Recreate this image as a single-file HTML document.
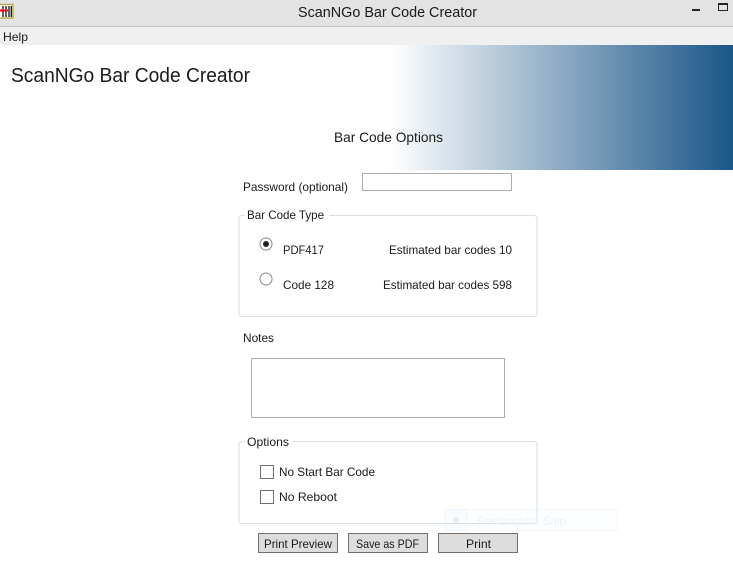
<!DOCTYPE html>
<html>
<head>
<meta charset="utf-8">
<style>
html,body{margin:0;padding:0;background:#fff;}
body{width:733px;height:561px;overflow:hidden;position:relative;}
div{position:absolute;box-sizing:border-box;}
svg{position:absolute;left:0;top:0;}
text{font-family:"Liberation Sans",sans-serif;fill:#1a1a1a;font-size:12px;}
</style>
</head>
<body>
<div style="left:0;top:0;width:733px;height:26px;background:#e3e3e3"></div>
<div style="left:0;top:26px;width:733px;height:1px;background:#c2c2c2"></div>
<div style="left:0;top:27px;width:733px;height:18px;background:#f0f0f0"></div>
<div style="left:390px;top:45px;width:343px;height:125px;background:linear-gradient(to right,#fff,#1b5688)"></div>

<!-- ghost snip -->
<div style="left:445px;top:509px;width:173px;height:22px;background:#fcfeff;border:1px solid #f3f8fc"></div>
<div style="left:445px;top:509px;width:22px;height:22px;background:#f7fbfe;border:1px solid #f1f7fb"></div>
<div style="left:453px;top:517px;width:6px;height:6px;border-radius:50%;background:#e8edf1"></div>

<!-- inputs -->
<div style="left:362px;top:173px;width:150px;height:18px;border:1px solid #abadb3;background:#fff"></div>
<div style="left:251px;top:358px;width:254px;height:60px;border:1px solid #abadb3;background:#fff"></div>

<!-- buttons -->
<div style="left:258px;top:533px;width:80px;height:20px;background:#ddd;border:1px solid #707070"></div>
<div style="left:348px;top:533px;width:80px;height:20px;background:#ddd;border:1px solid #707070"></div>
<div style="left:438px;top:533px;width:80px;height:20px;background:#ddd;border:1px solid #707070"></div>

<svg width="733" height="561" viewBox="0 0 733 561">
  <!-- app icon -->
  <rect x="-2" y="4.5" width="15" height="13.5" fill="#fff" stroke="#c2a94f" stroke-width="1.5"/>
  <path d="M3 6V17M6 6V17M9 6V17M11.3 6V17" stroke="#111" stroke-width="1.3" fill="none"/>
  <path d="M0 10.5H8" stroke="#e8121a" stroke-width="2" fill="none"/>
  <path d="M0 10.5L3 8V13Z" fill="#e8121a"/>

  <!-- window controls -->
  <rect x="692" y="9" width="8" height="2" fill="#222"/>
  <path d="M718.5 3.5H727.5V10.5H718.5Z" fill="none" stroke="#222" stroke-width="1"/>
  <rect x="718" y="3" width="10" height="2" fill="#222"/>

  <!-- group boxes -->
  <path d="M245 215.5H242a3 3 0 0 0-3 3V313.5a3 3 0 0 0 3 3H534a3 3 0 0 0 3-3V218.5a3 3 0 0 0-3-3H329" fill="none" stroke="#d5dfe5"/>
  <path d="M245 441.5H242a3 3 0 0 0-3 3V520.5a3 3 0 0 0 3 3H534a3 3 0 0 0 3-3V444.5a3 3 0 0 0-3-3H293" fill="none" stroke="#d5dfe5"/>

  <!-- radios -->
  <circle cx="266" cy="244" r="6" fill="#fff" stroke="#8a8a8a"/>
  <circle cx="266" cy="244" r="3" fill="#222"/>
  <circle cx="266" cy="279" r="6" fill="#fff" stroke="#8a8a8a"/>

  <!-- checkboxes -->
  <rect x="260.5" y="465.5" width="13" height="13" fill="#fff" stroke="#707070"/>
  <rect x="260.5" y="490.5" width="13" height="13" fill="#fff" stroke="#707070"/>

  <!-- text -->
  <text x="298" y="17" style="font-size:14.5px" textLength="179" lengthAdjust="spacingAndGlyphs">ScanNGo Bar Code Creator</text>
  <text x="3" y="41" textLength="25" lengthAdjust="spacingAndGlyphs">Help</text>
  <text x="11" y="82" style="font-size:20px" textLength="239" lengthAdjust="spacingAndGlyphs">ScanNGo Bar Code Creator</text>
  <text x="334" y="142" style="font-size:14px" textLength="109" lengthAdjust="spacingAndGlyphs">Bar Code Options</text>
  <text x="243" y="191" textLength="105" lengthAdjust="spacingAndGlyphs">Password (optional)</text>
  <text x="247" y="219" textLength="77" lengthAdjust="spacingAndGlyphs">Bar Code Type</text>
  <text x="283" y="254" textLength="41" lengthAdjust="spacingAndGlyphs">PDF417</text>
  <text x="389" y="254" textLength="123" lengthAdjust="spacingAndGlyphs">Estimated bar codes 10</text>
  <text x="283" y="289" textLength="51" lengthAdjust="spacingAndGlyphs">Code 128</text>
  <text x="383" y="289" textLength="129" lengthAdjust="spacingAndGlyphs">Estimated bar codes 598</text>
  <text x="243" y="342" textLength="31" lengthAdjust="spacingAndGlyphs">Notes</text>
  <text x="247" y="446" textLength="42" lengthAdjust="spacingAndGlyphs">Options</text>
  <text x="279" y="476" textLength="96" lengthAdjust="spacingAndGlyphs">No Start Bar Code</text>
  <text x="279" y="501" textLength="58" lengthAdjust="spacingAndGlyphs">No Reboot</text>
  <text x="264" y="548" textLength="68" lengthAdjust="spacingAndGlyphs">Print Preview</text>
  <text x="356" y="548" textLength="63" lengthAdjust="spacingAndGlyphs">Save as PDF</text>
  <text x="466" y="548" textLength="25" lengthAdjust="spacingAndGlyphs">Print</text>
  <text x="477" y="525" style="fill:#eef1f4" textLength="89" lengthAdjust="spacingAndGlyphs">Rectangular Snip</text>
</svg>
</body>
</html>
